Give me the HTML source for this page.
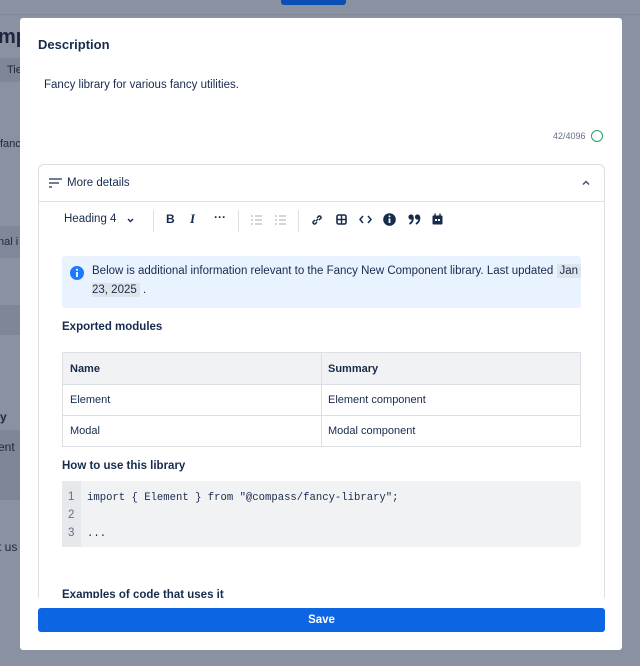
<!DOCTYPE html>
<html><head><meta charset="utf-8"><style>
*{box-sizing:border-box;margin:0;padding:0}
body{width:640px;height:666px;overflow:hidden;background:#8a91a1;font-family:"Liberation Sans",sans-serif;color:#172b4d;position:relative}
.abs{position:absolute}
.bg{color:#1d2840;font-size:12px}
.modal{left:20px;top:18px;width:602px;height:632px;background:#fff;border-radius:3px}
.t{position:absolute;white-space:nowrap}
.ic{position:absolute}
</style></head><body>
<div class="abs" style="left:281px;top:0;width:65px;height:5px;background:#0b4fb5;border-radius:0 0 3px 3px"></div>
<div class="abs" style="left:0;top:14px;width:640px;height:1px;background:#7f8797"></div>
<div class="abs" style="left:0;top:58px;width:20px;height:24px;background:#7f8696"></div>
<div class="abs" style="left:0;top:226px;width:20px;height:32px;background:#7f8798"></div>
<div class="abs" style="left:0;top:305px;width:20px;height:30px;background:#7f8696"></div>
<div class="abs" style="left:0;top:430px;width:20px;height:70px;background:#7f8696"></div>
<div class="t bg" style="left:-2px;top:26px;font-size:20px;font-weight:bold">mp</div>
<div class="t bg" style="left:7px;top:64px;font-size:11px">Tie</div>
<div class="t bg" style="left:0;top:138px;font-size:11px">fanc</div>
<div class="t bg" style="left:-2px;top:236px;font-size:11px">nal i</div>
<div class="t bg" style="left:0;top:410px;font-size:12px;font-weight:bold">y</div>
<div class="t bg" style="left:-2px;top:440px;font-size:12px">ent</div>
<div class="t bg" style="left:-2px;top:540px;font-size:12px">t us</div>

<div class="abs modal">
 <div class="t" style="left:18px;top:19px;font-size:13px;font-weight:bold">Description</div>
 <div class="t" style="left:24px;top:61px;font-size:11.5px">Fancy library for various fancy utilities.</div>
 <div class="t" style="left:533px;top:113px;font-size:9px;color:#626f86">42/4096</div>
 <div class="ic" style="left:571px;top:112px;width:12px;height:12px;border:1.3px solid #22a06b;border-radius:50%"></div>

 <div class="abs" style="left:18px;top:146px;width:567px;height:434px;border:1px solid #dcdfe4;border-bottom:none;border-radius:6px 6px 0 0;overflow:hidden">
  <svg class="ic" style="left:10px;top:13px" width="14" height="11"><path d="M0 1h13M0 5h10M0 9h3" stroke="#44546f" stroke-width="1.4"/></svg>
  <div class="t" style="left:28px;top:12px;font-size:11.5px">More details</div>
  <svg class="ic" style="left:543px;top:15px" width="8" height="6"><path d="M1 4.5L4 1.5L7 4.5" stroke="#44546f" stroke-width="1.5" fill="none"/></svg>
  <div class="abs" style="left:0;top:36px;width:567px;height:1px;background:#dcdfe4"></div>

  <div class="t" style="left:25px;top:48px;font-size:11.5px">Heading 4</div>
  <svg class="ic" style="left:88px;top:53px" width="7" height="5"><path d="M1 1L3.5 3.5L6 1" stroke="#172b4d" stroke-width="1.4" fill="none"/></svg>
  <div class="abs" style="left:114px;top:45px;width:1px;height:22px;background:#dcdfe4"></div>
  <div class="t" style="left:127px;top:47px;font-size:12px;font-weight:bold">B</div>
  <div class="t" style="left:151px;top:46px;font-size:13px;font-style:italic;font-family:'Liberation Serif',serif;font-weight:bold">I</div>
  <div class="t" style="left:175px;top:45px;font-size:12px;font-weight:bold">···</div>
  <div class="abs" style="left:199px;top:45px;width:1px;height:22px;background:#dcdfe4"></div>
  <svg class="ic" style="left:212px;top:50px" width="11" height="10"><path d="M0 1h2M0 5h2M0 9h2M4 1h7M4 5h7M4 9h7" stroke="#a5adba" stroke-width="1"/></svg>
  <svg class="ic" style="left:236px;top:50px" width="11" height="10"><path d="M0 1h2M0 5h2M0 9h2M4 1h7M4 5h7M4 9h7" stroke="#a5adba" stroke-width="1"/></svg>
  <div class="abs" style="left:259px;top:45px;width:1px;height:22px;background:#dcdfe4"></div>
  <svg class="ic" style="left:272px;top:49px" width="12" height="12"><path d="M5 7L7 5M4 6L2 8a1.7 1.7 0 0 0 2 2l2-2M8 6l2-2a1.7 1.7 0 0 0-2-2L6 4" stroke="#172b4d" stroke-width="1.5" fill="none"/></svg>
  <svg class="ic" style="left:297px;top:49px" width="11" height="11"><rect x="1" y="1" width="9" height="9" rx="1.5" stroke="#172b4d" stroke-width="1.6" fill="none"/><path d="M5.5 1v9M1 5.5h9" stroke="#172b4d" stroke-width="1.4"/></svg>
  <svg class="ic" style="left:320px;top:49px" width="13" height="11"><path d="M4 2L1 5.5L4 9M9 2l3 3.5L9 9" stroke="#172b4d" stroke-width="1.5" fill="none"/></svg>
  <svg class="ic" style="left:344px;top:48px" width="13" height="13"><circle cx="6.5" cy="6.5" r="6.3" fill="#172b4d"/><path d="M6.5 5.5v4.5" stroke="#fff" stroke-width="1.8"/><circle cx="6.5" cy="3.4" r="1" fill="#fff"/></svg>
  <svg class="ic" style="left:369px;top:49px" width="13" height="11"><circle cx="3" cy="3" r="2.6" fill="#172b4d"/><circle cx="9.5" cy="3" r="2.6" fill="#172b4d"/><path d="M5 3.5Q5 8 1.5 10M11.5 3.5Q11.5 8 8 10" stroke="#172b4d" stroke-width="1.8" fill="none"/></svg>
  <svg class="ic" style="left:393px;top:48px" width="11" height="12"><rect x="0.5" y="2.5" width="10" height="9" rx="1" fill="#172b4d"/><path d="M3 0.5v3M8 0.5v3" stroke="#172b4d" stroke-width="1.4"/><rect x="3" y="6" width="2" height="2" fill="#fff"/><rect x="6" y="6" width="2" height="2" fill="#fff"/></svg>

  <div class="abs" style="left:23px;top:91px;width:519px;height:52px;background:#e9f2ff;border-radius:3px">
   <svg class="ic" style="left:8px;top:10px" width="14" height="14"><circle cx="7" cy="7" r="7" fill="#1d7afc"/><path d="M7 6v5" stroke="#fff" stroke-width="1.8"/><circle cx="7" cy="3.8" r="1.1" fill="#fff"/></svg>
   <div class="t" style="left:30px;top:9px;font-size:11.5px">Below is additional information relevant to the Fancy New Component library. Last updated <span style="background:#dfe4ea;padding:1px 3px">Jan</span></div>
   <div class="t" style="left:30px;top:28px;font-size:11.5px"><span style="background:#dfe4ea;padding:1px 3px 1px 0">23, 2025</span> .</div>
  </div>

  <div class="t" style="left:23px;top:156px;font-size:11.5px;font-weight:bold">Exported modules</div>
  <table class="abs" style="left:23px;top:187px;width:519px;border-collapse:collapse;font-size:11px">
   <tr style="background:#f1f2f4;height:32px"><th style="text-align:left;padding-left:7px;border:1px solid #dcdfe4;width:259px">Name</th><th style="text-align:left;padding-left:6px;border:1px solid #dcdfe4">Summary</th></tr>
   <tr style="height:31px"><td style="padding-left:7px;border:1px solid #dcdfe4">Element</td><td style="padding-left:6px;border:1px solid #dcdfe4">Element component</td></tr>
   <tr style="height:31px"><td style="padding-left:7px;border:1px solid #dcdfe4">Modal</td><td style="padding-left:6px;border:1px solid #dcdfe4">Modal component</td></tr>
  </table>
  <div class="t" style="left:23px;top:295px;font-size:11.5px;font-weight:bold">How to use this library</div>
  <div class="abs" style="left:23px;top:316px;width:519px;height:66px;background:#f1f2f4;border-radius:3px;font-family:'Liberation Mono',monospace;font-size:10.6px;color:#172b4d">
   <div class="abs" style="left:0;top:0;width:19px;height:66px;background:#e6e8eb"></div>
   <div class="t" style="left:6px;top:7px;color:#626f86;line-height:18px;font-family:'Liberation Sans',sans-serif;font-size:11.5px">1<br>2<br>3</div>
   <div class="t" style="left:25px;top:8px;line-height:18px">import { Element } from "@compass/fancy-library";<br>&nbsp;<br>...</div>
  </div>
  <div class="t" style="left:23px;top:424px;font-size:11.5px;font-weight:bold">Examples of code that uses it</div>
 </div>

 <div class="abs" style="left:18px;top:590px;width:567px;height:24px;background:#0c66e4;border-radius:3px;color:#fff;font-size:11.5px;font-weight:bold;text-align:center;line-height:24px">Save</div>
</div>
</body></html>
